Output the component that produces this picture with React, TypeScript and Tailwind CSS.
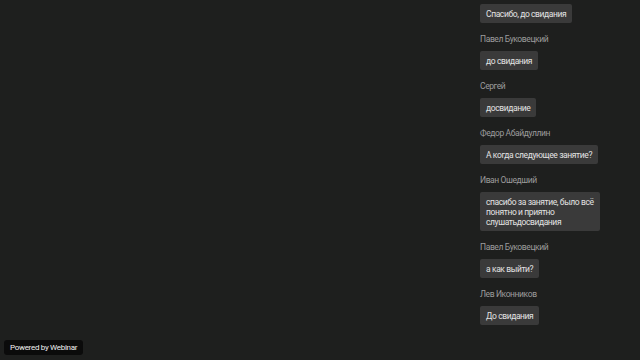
const messages = [
  { author: "", text: "Спасибо, до свидания" },
  { author: "Павел Буковецкий", text: "до свидания" },
  { author: "Сергей", text: "досвидание" },
  { author: "Федор Абайдуллин", text: "А когда следующее занятие?" },
  { author: "Иван Ошедший", text: "спасибо за занятие, было всё понятно и приятно слушатьдосвидания" },
  { author: "Павел Буковецкий", text: "а как выйти?" },
  { author: "Лев Иконников", text: "До свидания" },
];

export default function App() {
  return (
    <div
      className="relative flex h-[360px] w-[640px] overflow-hidden bg-[#1e1f1e]"
      style={{ fontFamily: "Roboto, 'Noto Sans', sans-serif" }}
    >
      <div className="flex-1" />
      <div className="flex w-[160px] flex-col gap-[11px] pt-[4px]">
        {messages.map((m, i) => (
          <div key={i} className="flex flex-col items-start">
            {m.author && (
              <div className="mb-[6px] text-[8.5px] leading-[11px] tracking-[-0.4px] text-[#9c9c9c]">
                {m.author}
              </div>
            )}
            <div className="max-w-[120px] rounded-[2px] bg-[#3a3a3a] px-[6px] py-[4.5px] text-[8.5px] leading-[10px] tracking-[-0.4px] text-[#e3e3e3]">
              {m.text}
            </div>
          </div>
        ))}
      </div>
      <div className="absolute bottom-[5px] left-[4px] rounded-[3px] bg-[#0b0b0b] px-[6px] py-[2px] text-[8px] leading-[11px] tracking-[-0.3px] text-[#f0f0f0]">
        Powered by Webinar
      </div>
    </div>
  );
}
